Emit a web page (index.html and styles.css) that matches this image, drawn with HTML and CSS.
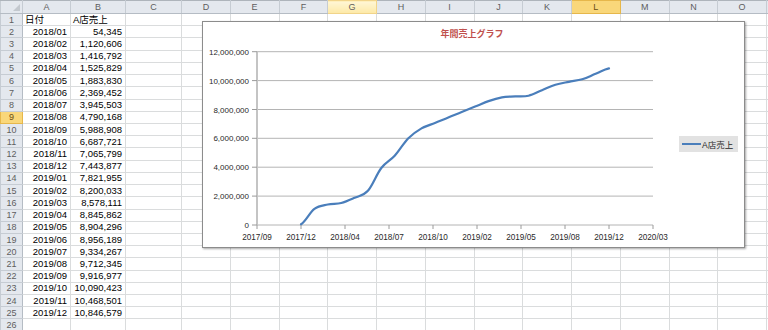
FILE: index.html
```html
<!DOCTYPE html>
<html>
<head>
    <meta charset="utf-8">
    <title>年間売上グラフ</title>
    <link rel="stylesheet" href="styles.css">
</head>
<body>
    <div class="sheet-wrap">
        <table class="sheet">
            <colgroup>
                <col class="col-rh"><col class="col-a"><col class="col-b"><col class="col-c">
                <col><col><col><col><col><col><col><col><col><col><col><col><col>
            </colgroup>
            <thead>
                <tr>
                    <th class="corner"></th>
                    <th>A</th><th>B</th><th>C</th><th>D</th><th>E</th><th>F</th>
                    <th class="hover">G</th><th>H</th><th>I</th><th>J</th><th>K</th>
                    <th class="active">L</th><th>M</th><th>N</th><th>O</th><th></th>
                </tr>
            </thead>
            <tbody>
                <tr><th>1</th><td>日付</td><td>A店売上</td><td></td><td></td><td></td><td></td><td></td><td></td><td></td><td></td><td></td><td></td><td></td><td></td><td></td><td></td></tr>
                <tr><th>2</th><td class="num">2018/01</td><td class="num">54,345</td><td></td><td></td><td></td><td></td><td></td><td></td><td></td><td></td><td></td><td></td><td></td><td></td><td></td><td></td></tr>
                <tr><th>3</th><td class="num">2018/02</td><td class="num">1,120,606</td><td></td><td></td><td></td><td></td><td></td><td></td><td></td><td></td><td></td><td></td><td></td><td></td><td></td><td></td></tr>
                <tr><th>4</th><td class="num">2018/03</td><td class="num">1,416,792</td><td></td><td></td><td></td><td></td><td></td><td></td><td></td><td></td><td></td><td></td><td></td><td></td><td></td><td></td></tr>
                <tr><th>5</th><td class="num">2018/04</td><td class="num">1,525,829</td><td></td><td></td><td></td><td></td><td></td><td></td><td></td><td></td><td></td><td></td><td></td><td></td><td></td><td></td></tr>
                <tr><th>6</th><td class="num">2018/05</td><td class="num">1,883,830</td><td></td><td></td><td></td><td></td><td></td><td></td><td></td><td></td><td></td><td></td><td></td><td></td><td></td><td></td></tr>
                <tr><th>7</th><td class="num">2018/06</td><td class="num">2,369,452</td><td></td><td></td><td></td><td></td><td></td><td></td><td></td><td></td><td></td><td></td><td></td><td></td><td></td><td></td></tr>
                <tr><th>8</th><td class="num">2018/07</td><td class="num">3,945,503</td><td></td><td></td><td></td><td></td><td></td><td></td><td></td><td></td><td></td><td></td><td></td><td></td><td></td><td></td></tr>
                <tr><th class="active">9</th><td class="num">2018/08</td><td class="num">4,790,168</td><td></td><td></td><td></td><td></td><td></td><td></td><td></td><td></td><td></td><td></td><td></td><td></td><td></td><td></td></tr>
                <tr><th>10</th><td class="num">2018/09</td><td class="num">5,988,908</td><td></td><td></td><td></td><td></td><td></td><td></td><td></td><td></td><td></td><td></td><td></td><td></td><td></td><td></td></tr>
                <tr><th>11</th><td class="num">2018/10</td><td class="num">6,687,721</td><td></td><td></td><td></td><td></td><td></td><td></td><td></td><td></td><td></td><td></td><td></td><td></td><td></td><td></td></tr>
                <tr><th>12</th><td class="num">2018/11</td><td class="num">7,065,799</td><td></td><td></td><td></td><td></td><td></td><td></td><td></td><td></td><td></td><td></td><td></td><td></td><td></td><td></td></tr>
                <tr><th>13</th><td class="num">2018/12</td><td class="num">7,443,877</td><td></td><td></td><td></td><td></td><td></td><td></td><td></td><td></td><td></td><td></td><td></td><td></td><td></td><td></td></tr>
                <tr><th>14</th><td class="num">2019/01</td><td class="num">7,821,955</td><td></td><td></td><td></td><td></td><td></td><td></td><td></td><td></td><td></td><td></td><td></td><td></td><td></td><td></td></tr>
                <tr><th>15</th><td class="num">2019/02</td><td class="num">8,200,033</td><td></td><td></td><td></td><td></td><td></td><td></td><td></td><td></td><td></td><td></td><td></td><td></td><td></td><td></td></tr>
                <tr><th>16</th><td class="num">2019/03</td><td class="num">8,578,111</td><td></td><td></td><td></td><td></td><td></td><td></td><td></td><td></td><td></td><td></td><td></td><td></td><td></td><td></td></tr>
                <tr><th>17</th><td class="num">2019/04</td><td class="num">8,845,862</td><td></td><td></td><td></td><td></td><td></td><td></td><td></td><td></td><td></td><td></td><td></td><td></td><td></td><td></td></tr>
                <tr><th>18</th><td class="num">2019/05</td><td class="num">8,904,296</td><td></td><td></td><td></td><td></td><td></td><td></td><td></td><td></td><td></td><td></td><td></td><td></td><td></td><td></td></tr>
                <tr><th>19</th><td class="num">2019/06</td><td class="num">8,956,189</td><td></td><td></td><td></td><td></td><td></td><td></td><td></td><td></td><td></td><td></td><td></td><td></td><td></td><td></td></tr>
                <tr><th>20</th><td class="num">2019/07</td><td class="num">9,334,267</td><td></td><td></td><td></td><td></td><td></td><td></td><td></td><td></td><td></td><td></td><td></td><td></td><td></td><td></td></tr>
                <tr><th>21</th><td class="num">2019/08</td><td class="num">9,712,345</td><td></td><td></td><td></td><td></td><td></td><td></td><td></td><td></td><td></td><td></td><td></td><td></td><td></td><td></td></tr>
                <tr><th>22</th><td class="num">2019/09</td><td class="num">9,916,977</td><td></td><td></td><td></td><td></td><td></td><td></td><td></td><td></td><td></td><td></td><td></td><td></td><td></td><td></td></tr>
                <tr><th>23</th><td class="num">2019/10</td><td class="num">10,090,423</td><td></td><td></td><td></td><td></td><td></td><td></td><td></td><td></td><td></td><td></td><td></td><td></td><td></td><td></td></tr>
                <tr><th>24</th><td class="num">2019/11</td><td class="num">10,468,501</td><td></td><td></td><td></td><td></td><td></td><td></td><td></td><td></td><td></td><td></td><td></td><td></td><td></td><td></td></tr>
                <tr><th>25</th><td class="num">2019/12</td><td class="num">10,846,579</td><td></td><td></td><td></td><td></td><td></td><td></td><td></td><td></td><td></td><td></td><td></td><td></td><td></td><td></td></tr>
                <tr><th>26</th><td></td><td></td><td></td><td></td><td></td><td></td><td></td><td></td><td></td><td></td><td></td><td></td><td></td><td></td><td></td><td></td></tr>
            </tbody>
        </table>

        <!-- chart object floating over the sheet -->
        <div class="chart">
            <svg width="541" height="225" viewBox="203 22 541 225">
                <text class="chart-title" x="472" y="37" text-anchor="middle">年間売上グラフ</text>

                <g class="gridlines">
                    <line x1="257" y1="51.7" x2="653" y2="51.7"/>
                    <line x1="257" y1="80.6" x2="653" y2="80.6"/>
                    <line x1="257" y1="109.5" x2="653" y2="109.5"/>
                    <line x1="257" y1="138.3" x2="653" y2="138.3"/>
                    <line x1="257" y1="167.2" x2="653" y2="167.2"/>
                    <line x1="257" y1="196.1" x2="653" y2="196.1"/>
                    <line x1="257" y1="225" x2="653" y2="225"/>
                </g>
                <line class="value-axis" x1="257" y1="51.7" x2="257" y2="225"/>

                <g class="ticks">
                    <line x1="252" y1="51.7" x2="257" y2="51.7"/>
                    <line x1="252" y1="80.6" x2="257" y2="80.6"/>
                    <line x1="252" y1="109.5" x2="257" y2="109.5"/>
                    <line x1="252" y1="138.3" x2="257" y2="138.3"/>
                    <line x1="252" y1="167.2" x2="257" y2="167.2"/>
                    <line x1="252" y1="196.1" x2="257" y2="196.1"/>
                    <line x1="252" y1="225" x2="257" y2="225"/>
                    <line x1="257" y1="225" x2="257" y2="229"/>
                    <line x1="301" y1="225" x2="301" y2="229"/>
                    <line x1="345" y1="225" x2="345" y2="229"/>
                    <line x1="389" y1="225" x2="389" y2="229"/>
                    <line x1="433" y1="225" x2="433" y2="229"/>
                    <line x1="477" y1="225" x2="477" y2="229"/>
                    <line x1="521" y1="225" x2="521" y2="229"/>
                    <line x1="565" y1="225" x2="565" y2="229"/>
                    <line x1="609" y1="225" x2="609" y2="229"/>
                    <line x1="653" y1="225" x2="653" y2="229"/>
                </g>

                <g class="axis-label" text-anchor="end">
                    <text x="249" y="54.7">12,000,000</text>
                    <text x="249" y="83.6">10,000,000</text>
                    <text x="249" y="112.5">8,000,000</text>
                    <text x="249" y="141.3">6,000,000</text>
                    <text x="249" y="170.2">4,000,000</text>
                    <text x="249" y="199.1">2,000,000</text>
                    <text x="249" y="228">0</text>
                </g>
                <g class="axis-label date" text-anchor="middle">
                    <text x="257" y="240">2017/09</text>
                    <text x="301" y="240">2017/12</text>
                    <text x="345" y="240">2018/04</text>
                    <text x="389" y="240">2018/07</text>
                    <text x="433" y="240">2018/10</text>
                    <text x="477" y="240">2019/02</text>
                    <text x="521" y="240">2019/05</text>
                    <text x="565" y="240">2019/08</text>
                    <text x="609" y="240">2019/12</text>
                    <text x="653" y="240">2020/03</text>
                </g>

                <path class="series" d="M301,224.2
                    C305.5,221.6 309.9,212.1 314.4,208.8
                    C318.9,205.5 323.3,205.5 327.8,204.5
                    C332.3,203.5 336.7,204.1 341.2,203.0
                    C345.7,201.9 350.1,199.8 354.6,197.8
                    C359.1,195.8 363.4,195.8 367.9,190.8
                    C372.4,185.8 376.8,173.8 381.3,168.0
                    C385.8,162.2 390.2,160.7 394.7,155.8
                    C399.2,150.9 403.6,143.1 408.1,138.5
                    C412.6,133.9 417.0,131.0 421.5,128.4
                    C426.0,125.8 430.4,124.8 434.9,123.0
                    C439.4,121.2 443.8,119.3 448.3,117.5
                    C452.8,115.7 457.2,113.8 461.7,112.0
                    C466.2,110.2 470.6,108.4 475.1,106.6
                    C479.6,104.8 484.0,102.7 488.5,101.1
                    C493.0,99.5 497.4,98.1 501.9,97.3
                    C506.4,96.5 510.7,96.7 515.2,96.4
                    C519.7,96.1 524.1,96.7 528.6,95.7
                    C533.1,94.7 537.5,92.0 542.0,90.2
                    C546.5,88.4 550.9,86.1 555.4,84.7
                    C559.9,83.3 564.3,82.7 568.8,81.8
                    C573.3,80.9 577.7,80.6 582.2,79.3
                    C586.7,78.0 591.1,75.6 595.6,73.8
                    C600.1,72.0 604.5,69.3 609.0,68.4"/>

                <g class="legend">
                    <rect x="679" y="136" width="59" height="16"/>
                    <line x1="682" y1="144" x2="701" y2="144"/>
                    <text x="702" y="147.5">A店売上</text>
                </g>
            </svg>
        </div>
    </div>
</body>
</html>
```

FILE: styles.css
```css
body {
    margin: 0;
    background-color: #ffffff;
    font-family: "Liberation Sans", "Noto Sans CJK JP", sans-serif;
    overflow: hidden;
}
.sheet-wrap {
    position: relative;
    width: 768px;
    height: 330px;
    overflow: hidden;
}

/* worksheet grid */
.sheet {
    border-collapse: collapse;
    table-layout: fixed;
    width: 814.75px;
    font-size: 9.5px;
    color: #000000;
}
.sheet col { width: 48.75px; }
.sheet col.col-rh { width: 22px; }
.sheet col.col-a { width: 48px; }
.sheet col.col-b { width: 55px; }
.sheet col.col-c { width: 56px; }
.sheet tr { height: 12.22px; }
.sheet thead tr { height: 13px; }
.sheet td {
    border: 1px solid #dadcdd;
    padding: 0 2px;
    line-height: 10px;
    white-space: nowrap;
    overflow: hidden;
}
.sheet td.num {
    text-align: right;
    padding-right: 3px;
}

/* row and column headers */
.sheet th {
    background-color: #e4e8ee;
    color: #5e5e5e;
    font-weight: normal;
    font-size: 9px;
    border: 1px solid #c6ccd3;
    padding: 0;
    line-height: 10px;
    text-align: center;
}
.sheet thead th {
    border-top-color: #aeb4bb;
    border-bottom-color: #b5bcc4;
}
.sheet tbody th {
    border-right-color: #b5bcc4;
}
.sheet th.corner {
    position: relative;
}
.sheet th.corner::after {
    content: "";
    position: absolute;
    right: 2px;
    bottom: 2px;
    border-style: solid;
    border-width: 0 0 7px 7px;
    border-color: transparent transparent #c3c8ce transparent;
}
.sheet th.hover {
    background: linear-gradient(#fff6d6, #fde9a6);
    border-color: #f1d48a;
}
.sheet th.active {
    background-color: #f9d77a;
    border-color: #e6b74b;
    color: #6b4e12;
}

/* chart object */
.chart {
    position: absolute;
    left: 202px;
    top: 21px;
    width: 541px;
    height: 225px;
    border: 1px solid #8c8c8c;
    background-color: #ffffff;
    box-shadow: 1px 1px 2px rgba(0, 0, 0, 0.35);
}
.chart svg {
    display: block;
}
.chart-title {
    font-size: 9px;
    font-weight: bold;
    fill: #c0504d;
}
.gridlines line {
    stroke: #b4b4b4;
    stroke-width: 1;
}
.value-axis {
    stroke: #c4c4c4;
    stroke-width: 2;
}
.ticks line {
    stroke: #9a9a9a;
    stroke-width: 1;
}
.axis-label {
    font-size: 8px;
    fill: #2a2a2a;
}
.axis-label.date {
    font-size: 8.2px;
}
.series {
    fill: none;
    stroke: #4a7ebb;
    stroke-width: 2.2;
    stroke-linecap: round;
}
.legend rect {
    fill: #e2e2e2;
}
.legend line {
    stroke: #4a7ebb;
    stroke-width: 2;
}
.legend text {
    font-size: 8.5px;
    fill: #262626;
}
```
